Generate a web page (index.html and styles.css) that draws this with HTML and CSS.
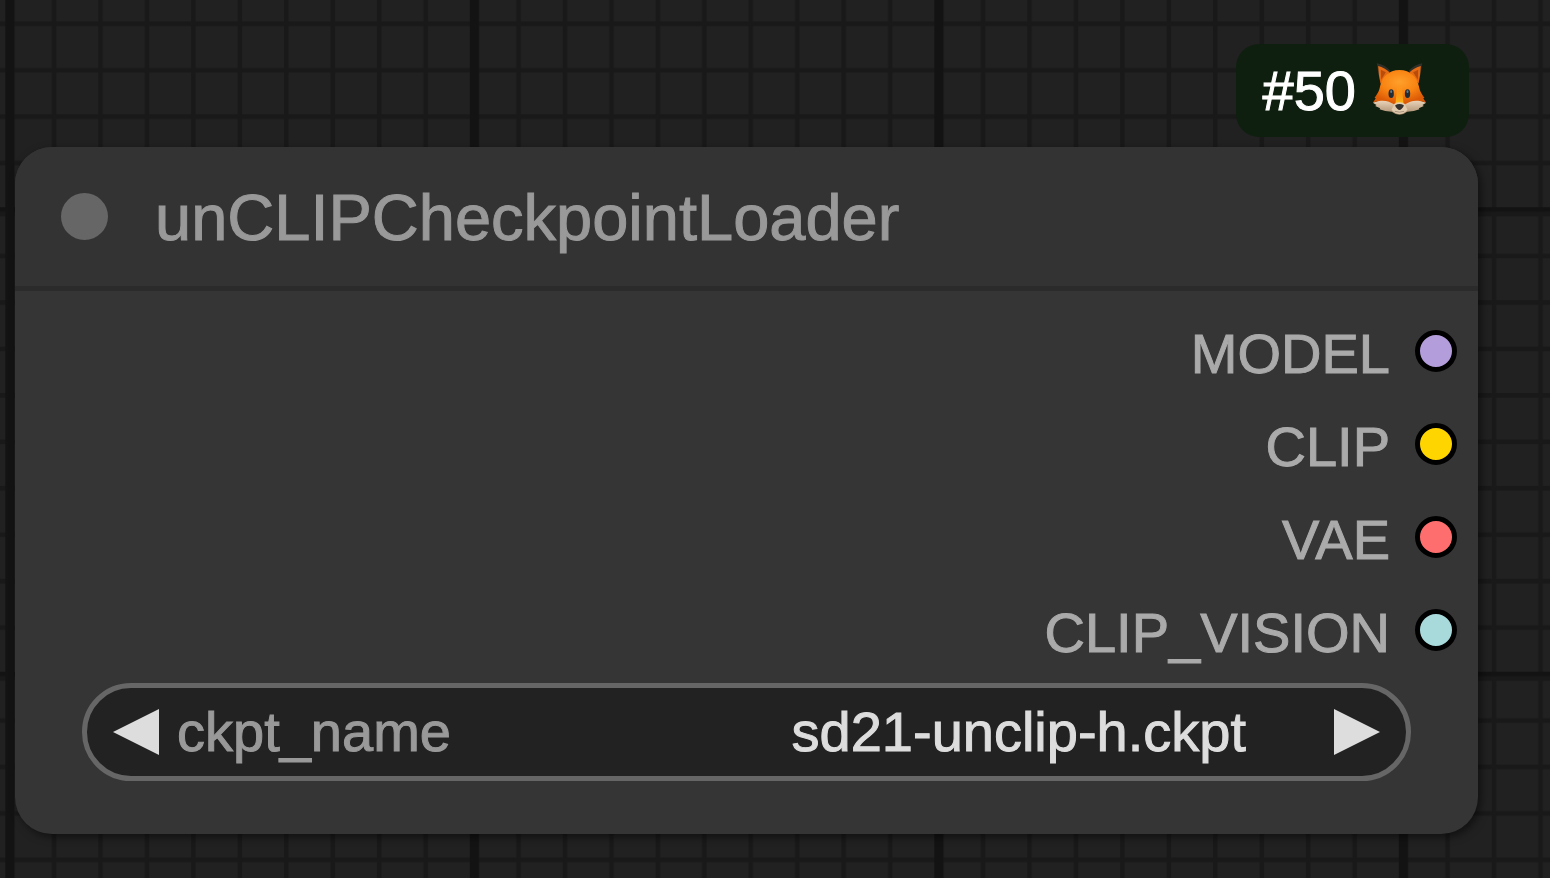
FILE: index.html
```html
<!DOCTYPE html>
<html lang="en">
<head>
<meta charset="utf-8">
<meta name="viewport" content="width=device-width, initial-scale=1">
<title>unCLIPCheckpointLoader</title>
<link rel="stylesheet" href="styles.css">
</head>
<body>
<svg class="grid" aria-hidden="true">
  <defs>
    <pattern id="cells" width="100" height="100" patternUnits="userSpaceOnUse" patternTransform="translate(5.3 207.2) scale(4.645)">
      <path class="grid-minor" d="M10 0h1v100h-1zM20 0h1v100h-1zM30 0h1v100h-1zM40 0h1v100h-1zM50 0h1v100h-1zM60 0h1v100h-1zM70 0h1v100h-1zM80 0h1v100h-1zM90 0h1v100h-1zM0 10h100v1h-100zM0 20h100v1h-100zM0 30h100v1h-100zM0 40h100v1h-100zM0 50h100v1h-100zM0 60h100v1h-100zM0 70h100v1h-100zM0 80h100v1h-100zM0 90h100v1h-100zM0 1h100v1h-100z"/>
      <path class="grid-major" d="M0 0h2v100h-2zM0 0h100v1h-100z"/>
    </pattern>
  </defs>
  <rect width="100%" height="100%" fill="url(#cells)"/>
</svg>
<main class="canvas">
  <div class="badge">
    <span>#50</span>
    <svg class="fox" viewBox="36 38 164 156" role="img" aria-label="fox">
      <defs>
        <radialGradient id="fur" cx="0.5" cy="0.35" r="0.6">
          <stop offset="0" stop-color="#ffa02c"/>
          <stop offset="0.55" stop-color="#f98412"/>
          <stop offset="1" stop-color="#dc5a06"/>
        </radialGradient>
        <linearGradient id="cheek" x1="0" y1="0" x2="0" y2="1">
          <stop offset="0" stop-color="#f0dcc2"/>
          <stop offset="1" stop-color="#a98a6b"/>
        </linearGradient>
        <linearGradient id="nose" x1="0" y1="0" x2="0" y2="1">
          <stop offset="0" stop-color="#ff9a16" stop-opacity="0"/>
          <stop offset="1" stop-color="#ffc21c"/>
        </linearGradient>
      </defs>
      <path fill="#30302a" d="M50 39Q73 43 91 62L61 98Q53 69 50 39ZM186 39Q163 43 145 62L175 98Q183 69 186 39Z"/>
      <path fill="#e76b13" d="M54 47Q74 52 88 66L61 100Q55 73 54 47ZM182 47Q162 52 148 66L175 100Q181 73 182 47Z"/>
      <path fill="#b84d0b" d="M62 58L77 66L63 88ZM174 58L159 66L173 88Z"/>
      <path fill="url(#cheek)" d="M38 157L70 146H166L198 157L187 164L191 167L176 174L178 177Q162 184 141 184Q130 193 118 193Q106 193 95 184Q74 184 58 177L60 174L45 167L49 164Z"/>
      <path fill="url(#fur)" d="M118 59C151 59 170 80 176 107C180 127 186 132 193 143L189 144L198 157C168 146 150 152 135 162L118 158L101 162C86 152 68 146 38 157L47 144L43 143C50 132 56 127 60 107C66 80 85 59 118 59Z"/>
      <path fill="url(#nose)" d="M112 100H124L130 159L118 163L106 159Z"/>
      <path fill="#e2cdb1" d="M103 160Q118 152 133 160L142 178Q130 191 118 191Q106 191 94 178Z"/>
      <path fill="#34302d" d="M105 165Q118 157 131 165Q131 170 124 176Q118 182 112 176Q105 170 105 165Z"/>
      <path fill="none" stroke="#8b7562" stroke-width="2" d="M104 183Q118 188 132 183"/>
      <ellipse cx="93" cy="130" rx="8" ry="13" fill="#202d36"/>
      <ellipse cx="142" cy="130" rx="8" ry="13" fill="#202d36"/>
      <ellipse cx="93" cy="124" rx="3" ry="4" fill="#657b8a"/>
      <ellipse cx="142" cy="124" rx="3" ry="4" fill="#657b8a"/>
    </svg>
  </div>
  <section class="node">
    <header class="node-header">
      <span class="node-dot"></span>
      <h1 class="node-title">unCLIPCheckpointLoader</h1>
    </header>
    <ul class="outputs">
      <li class="output"><span class="output-name">MODEL</span><span class="port port-model"></span></li>
      <li class="output"><span class="output-name">CLIP</span><span class="port port-clip"></span></li>
      <li class="output"><span class="output-name">VAE</span><span class="port port-vae"></span></li>
      <li class="output"><span class="output-name">CLIP_VISION</span><span class="port port-vision"></span></li>
    </ul>
    <div class="widget">
      <button class="arrow" type="button" aria-label="Previous checkpoint"><svg viewBox="0 0 46 46"><path d="M0 23L46 0V46Z"/></svg></button>
      <label class="widget-label" for="ckpt">ckpt_name</label>
      <select class="widget-value" id="ckpt"><option>sd21-unclip-h.ckpt</option></select>
      <button class="arrow" type="button" aria-label="Next checkpoint"><svg viewBox="0 0 46 46"><path d="M46 23L0 0V46Z"/></svg></button>
    </div>
  </section>
</main>
</body>
</html>
```
FILE: styles.css
```css
* {
  box-sizing: border-box;
}

body {
  margin: 0;
  min-height: 100vh;
  background: #212121;
  font-family: "Liberation Sans", Arial, sans-serif;
  font-size: 56px;
  line-height: 64px;
  -webkit-text-stroke: 1px currentColor;
}

.grid {
  position: absolute;
  inset: 0;
  width: 100%;
  height: 100%;
}

.grid-minor {
  fill: #191919;
}

.grid-major {
  fill: #131313;
}

.canvas {
  position: relative;
  display: flex;
  flex-direction: column;
  gap: 10px;
  padding: 44px 72px 44px 15px;
}

.badge {
  display: flex;
  align-items: center;
  align-self: flex-end;
  gap: 16px;
  height: 93px;
  margin-right: 9px;
  padding: 0 42px 0 27px;
  border-radius: 23px;
  background: #0f1f0f;
  color: #fff;
}

.fox {
  width: 55px;
  height: 52px;
  margin-bottom: 4px;
}

.node {
  padding-bottom: 53px;
  border-radius: 37px;
  background: #353535;
  box-shadow: 3px 3px 8px rgba(0, 0, 0, 0.5);
}

.node-header {
  display: flex;
  align-items: center;
  gap: 47px;
  height: 144px;
  padding-left: 46px;
  border-bottom: 5px solid #2b2b2b;
  border-radius: 37px 37px 0 0;
  background: #333;
}

.node-dot {
  width: 47px;
  height: 47px;
  border-radius: 50%;
  background: #666;
}

.node-title {
  margin: 0;
  padding-top: 2px;
  color: #999;
  font-size: 65px;
  font-weight: 400;
}

.outputs {
  margin: 0;
  padding: 13px 21px 7px;
  list-style: none;
}

.output {
  display: flex;
  align-items: center;
  justify-content: flex-end;
  gap: 25px;
  height: 93px;
  color: #aaa;
}

.output-name {
  padding-top: 6px;
}

.port {
  width: 42px;
  height: 42px;
  border: 5px solid #000;
  border-radius: 50%;
}

.port-model {
  background: #b39ddb;
}

.port-clip {
  background: #ffd500;
}

.port-vae {
  background: #ff6e6e;
}

.port-vision {
  background: #a8dadc;
}

.widget {
  display: flex;
  align-items: center;
  height: 98px;
  margin: 0 67px;
  padding: 0 26px;
  border: 5px solid #666;
  border-radius: 49px;
  background: #222;
}

.arrow {
  flex: none;
  width: 46px;
  height: 46px;
  padding: 0;
  border: 0;
  background: none;
}

.arrow svg {
  display: block;
  fill: #ddd;
}

.widget-label {
  margin-left: 18px;
  color: #999;
}

.widget-value {
  flex: 1;
  min-width: 0;
  margin-right: 88px;
  padding: 0;
  border: 0;
  appearance: none;
  background: none;
  color: #ddd;
  font: inherit;
  text-align: right;
  text-align-last: right;
}
```
